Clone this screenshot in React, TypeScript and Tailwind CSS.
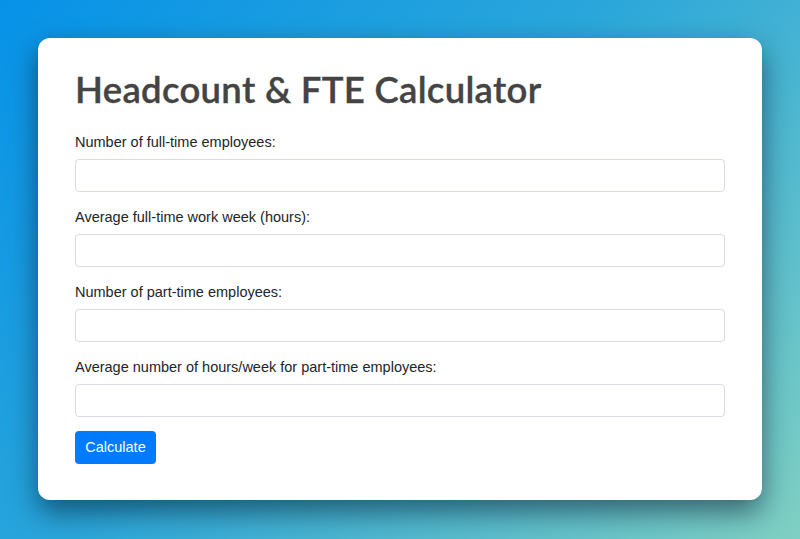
import React from "react";

const fields = [
  "Number of full-time employees:",
  "Average full-time work week (hours):",
  "Number of part-time employees:",
  "Average number of hours/week for part-time employees:",
];

export default function App() {
  return (
    <div className="w-[800px] h-[539px] bg-[linear-gradient(135deg,#0792e8_0%,#2aa6da_45%,#80d0c2_100%)] pt-[38px] px-[38px] overflow-hidden">
      <div className="bg-white rounded-[12px] h-[462px] shadow-[0_12px_28px_rgba(0,20,40,0.55)] px-[37px] pt-[29px]">
        <h1 className="font-['Lato',sans-serif] font-semibold text-[36.5px] leading-[44px] text-[#444444] tracking-[0.3px] [-webkit-text-stroke:0.35px_#444444]">
          Headcount &amp; FTE Calculator
        </h1>
        <div className="mt-[22px] flex flex-col gap-[16px] font-['Liberation_Sans',Arial,sans-serif]">
          {fields.map((f) => (
            <div key={f} className="flex flex-col">
              <label className="text-[14.5px] leading-[18px] text-[#212529] mb-[8px]">{f}</label>
              <input
                type="text"
                className="h-[33px] w-full border border-[#d6dbe4] rounded-[4px] bg-white px-3 outline-none"
              />
            </div>
          ))}
          <div className="-mt-[2px]">
            <button className="h-[33px] w-[81px] rounded-[4px] bg-[#007bff] text-white text-[14.5px] font-['Liberation_Sans',Arial,sans-serif]">
              Calculate
            </button>
          </div>
        </div>
      </div>
    </div>
  );
}
